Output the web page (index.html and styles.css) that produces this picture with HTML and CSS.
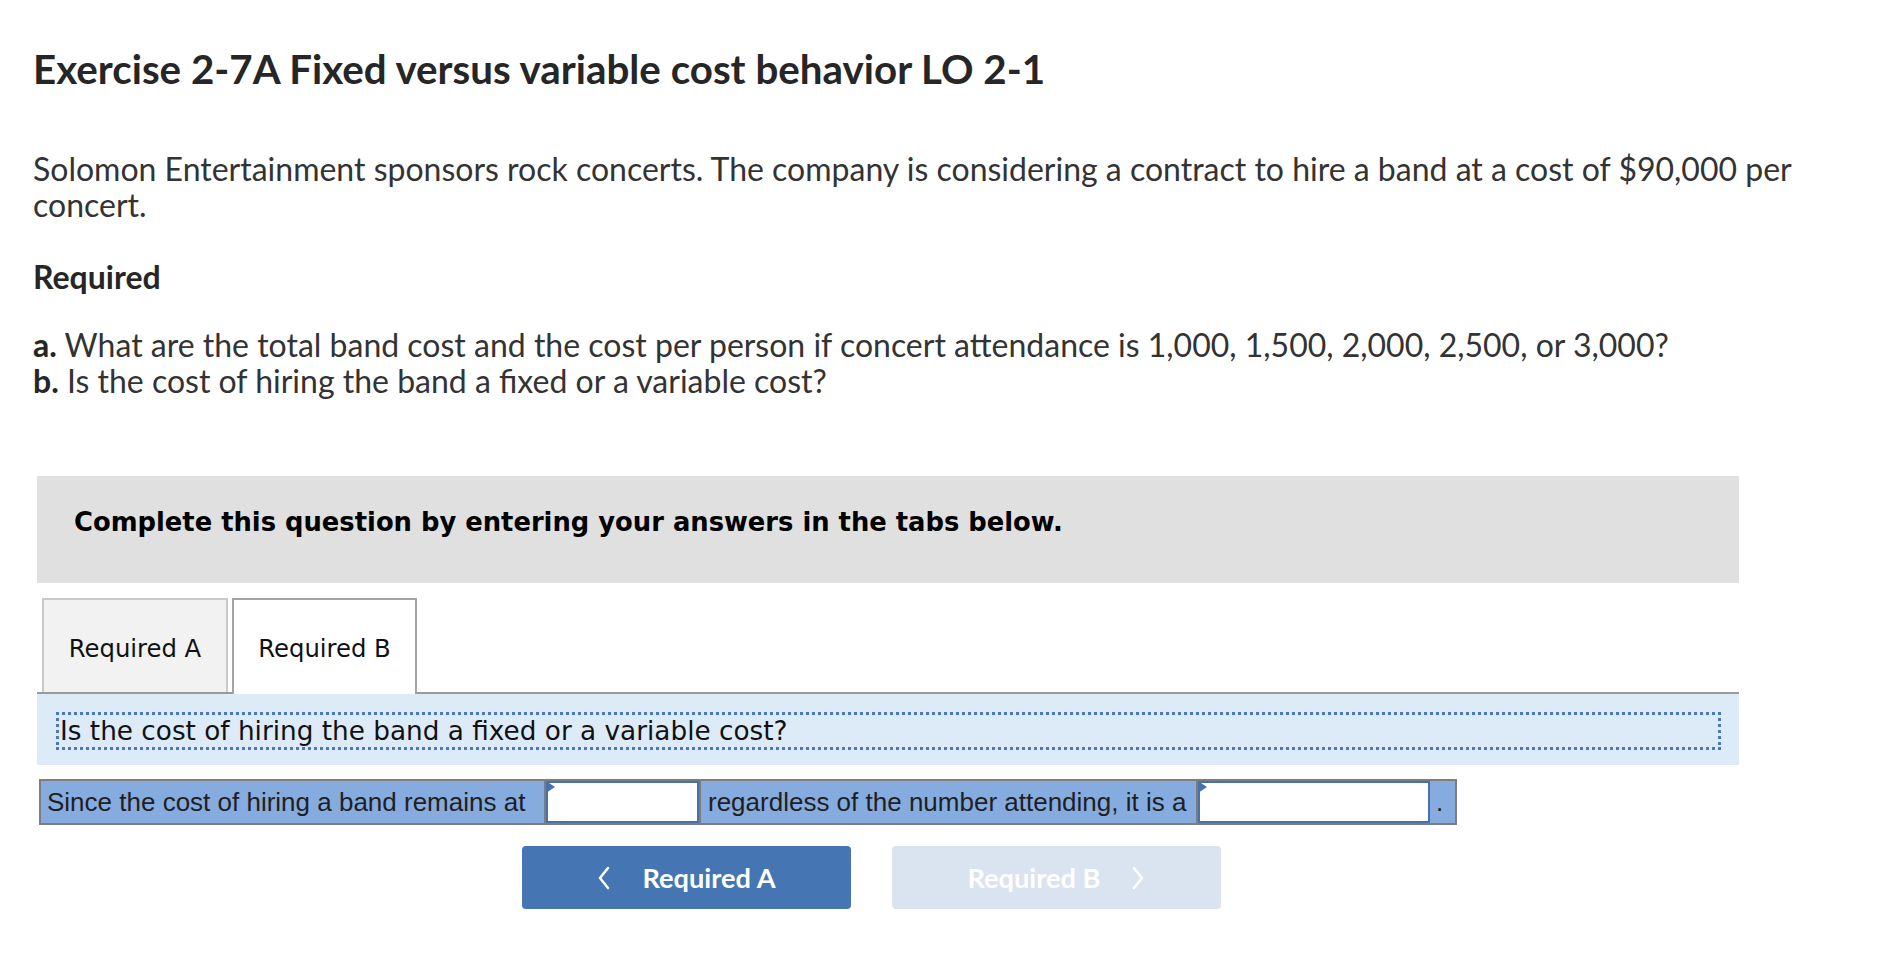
FILE: index.html
```html
<!DOCTYPE html>
<html lang="en">
<head>
<meta charset="utf-8">
<title>Exercise 2-7A</title>
<link rel="stylesheet" href="styles.css">
</head>
<body>
<main class="page">
  <h1 class="title">Exercise 2-7A Fixed versus variable cost behavior LO 2-1</h1>
  <p class="intro">Solomon Entertainment sponsors rock concerts. The company is considering a contract to hire a band at a cost of $90,000 per concert.</p>
  <h2 class="req">Required</h2>
  <ul class="parts">
    <li><b>a.</b> What are the total band cost and the cost per person if concert attendance is 1,000, 1,500, 2,000, 2,500, or 3,000?</li>
    <li><b>b.</b> Is the cost of hiring the band a fixed or a variable cost?</li>
  </ul>

  <section class="instructions">Complete this question by entering your answers in the tabs below.</section>

  <div class="tabs">
    <button class="tab">Required A</button>
    <button class="tab active">Required B</button>
  </div>
  <div class="panel">
    <div class="q-focus">Is the cost of hiring the band a fixed or a variable cost?</div>
  </div>

  <div class="answer">
    <div class="cell c1">Since the cost of hiring a band remains at</div>
    <div class="cell field f1"></div>
    <div class="cell c3">regardless of the number attending, it is a</div>
    <div class="cell field f2"></div>
    <div class="cell c5">.</div>
  </div>

  <nav class="steps">
    <button class="step prev">
      <svg class="chev" width="14" height="24" viewBox="0 0 14 24"><path d="M11 2 L3 12 L11 22" /></svg>
      <span>Required A</span>
    </button>
    <button class="step next">
      <span>Required B</span>
      <svg class="chev" width="14" height="24" viewBox="0 0 14 24"><path d="M3 2 L11 12 L3 22" /></svg>
    </button>
  </nav>
</main>
</body>
</html>
```
FILE: styles.css
```css
* { box-sizing: border-box; }

body {
  margin: 0;
  background: #fff;
  font-family: Lato, "Liberation Sans", sans-serif;
  color: #333;
}

.page {
  padding: 46px 0 40px 33px;
  width: 1898px;
}

.title {
  margin: 0;
  font-size: 40.3px;
  line-height: 46px;
  font-weight: 700;
  color: #262626;
}

.intro {
  margin: 59px 0 0;
  font-size: 32px;
  line-height: 36px;
  width: 1790px;
}

.req {
  margin: 36px 0 0;
  font-size: 32px;
  line-height: 36px;
  font-weight: 700;
  color: #262626;
}

.parts {
  list-style: none;
  margin: 32px 0 0;
  padding: 0;
  font-size: 32px;
  line-height: 36px;
}

.parts b { font-weight: 700; color: #262626; }

.instructions {
  margin: 77px 0 0 4px;
  width: 1702px;
  height: 107px;
  background: #e0e0e0;
  padding: 31px 0 0 37px;
  font: 700 25.8px/30px "DejaVu Sans", Verdana, sans-serif;
  color: #000;
}

.tabs {
  margin: 15px 0 0 4px;
  width: 1702px;
  display: flex;
  gap: 4px;
  padding-left: 5px;
  border-bottom: 2px solid #9a9a9a;
}

.tab {
  width: 186px;
  height: 94px;
  border: 2px solid #c9c9c9;
  border-bottom: none;
  background: #f2f2f2;
  font: 24.3px "DejaVu Sans", Verdana, sans-serif;
  color: #111;
  padding: 4px 0 0;
}

.tab.active {
  width: 185px;
  border-color: #a3a3a3;
  background: #fff;
  height: 96px;
  margin-bottom: -2px;
  padding-bottom: 2px;
}

.panel {
  margin-left: 4px;
  width: 1702px;
  height: 71px;
  background: #ddebf8;
  padding: 18px 18px 0 19px;
}

.q-focus {
  height: 38px;
  padding: 0 0 0 4px;
  font: 26.3px/38px "DejaVu Sans", Verdana, sans-serif;
  color: #111;
  background:
    repeating-linear-gradient(90deg, #4a78bf 0 3px, transparent 3px 6px) left top / 100% 3px no-repeat,
    repeating-linear-gradient(90deg, #4a78bf 0 3px, transparent 3px 6px) left bottom / 100% 3px no-repeat,
    repeating-linear-gradient(180deg, #4a78bf 0 3px, transparent 3px 6px) left top / 3px 100% no-repeat,
    repeating-linear-gradient(180deg, #4a78bf 0 3px, transparent 3px 6px) right top / 3px 100% no-repeat;
}

.answer {
  margin: 14px 0 0 6px;
  width: 1418px;
  height: 46px;
  display: flex;
  border: 2px solid #7d7d7d;
  background: #85abdf;
}

.cell {
  font: 26px/42px "Liberation Sans", Arial, sans-serif;
  color: #1f1f1f;
  white-space: nowrap;
  padding: 0 7px;
}

.c1 { width: 505px; padding-left: 6px; border-right: 2px solid #7d7d7d; }
.f1 { width: 153px; }
.c3 { width: 499px; border-left: 2px solid #7d7d7d; border-right: 2px solid #7d7d7d; }
.f2 { width: 232px; border-right: 2px solid #7d7d7d; }
.c5 { flex: 1; padding: 0 0 0 6px; }

.field {
  position: relative;
  background: #fff;
  border: 2px solid #4671b0;
}

.field::before {
  content: "";
  position: absolute;
  left: -2px;
  top: -2px;
  border-left: 9px solid #4671b0;
  border-top: 6px solid transparent;
  border-bottom: 6px solid transparent;
}

.steps {
  display: flex;
  gap: 41px;
  margin: 21px 0 0 489px;
}

.step {
  width: 329px;
  height: 63px;
  border: none;
  border-radius: 4px;
  font: 700 27.2px Lato, "Liberation Sans", sans-serif;
  color: #fff;
  display: flex;
  align-items: center;
  justify-content: center;
  gap: 31px;
  padding: 0;
}

.prev { background: #4576b3; }
.next { background: #d9e4f0; }

.chev path {
  fill: none;
  stroke: #fff;
  stroke-width: 2.5;
  stroke-linecap: round;
  stroke-linejoin: round;
}
```
